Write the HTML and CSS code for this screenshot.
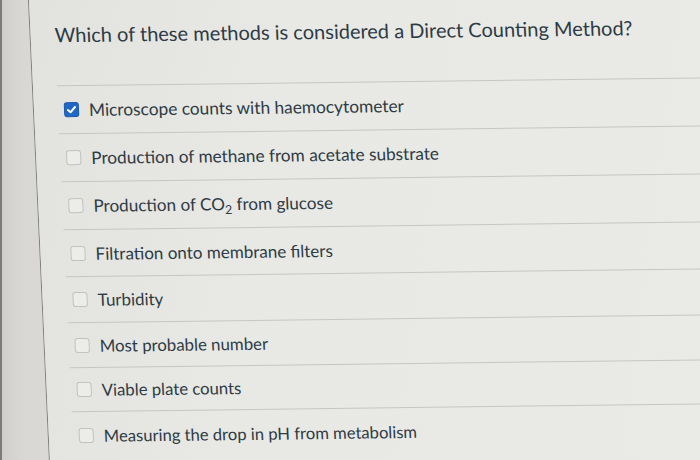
FILE: index.html
```html
<!DOCTYPE html>
<html lang="en">
<head>
<meta charset="utf-8">
<title>Quiz question</title>
<link rel="stylesheet" href="styles.css">
</head>
<body>
<div class="page">
  <div class="bezel"></div>
  <div class="sheet">
    <h1 class="question">Which of these methods is considered a Direct Counting Method?</h1>
    <ul class="answers">
      <li class="opt">
        <span class="box checked"><svg viewBox="0 0 16 16" width="16" height="16"><path d="M3.6 8.4 L6.6 11.3 L12.4 4.8" fill="none" stroke="#fff" stroke-width="2.4" stroke-linecap="round" stroke-linejoin="round"/></svg></span>
        <span class="label">Microscope counts with haemocytometer</span>
      </li>
      <li class="opt"><span class="box"></span><span class="label">Production of methane from acetate substrate</span></li>
      <li class="opt"><span class="box"></span><span class="label">Production of CO<sub>2</sub> from glucose</span></li>
      <li class="opt"><span class="box"></span><span class="label">Filtration onto membrane filters</span></li>
      <li class="opt"><span class="box"></span><span class="label">Turbidity</span></li>
      <li class="opt"><span class="box"></span><span class="label">Most probable number</span></li>
      <li class="opt"><span class="box"></span><span class="label">Viable plate counts</span></li>
      <li class="opt"><span class="box"></span><span class="label">Measuring the drop in pH from metabolism</span></li>
    </ul>
  </div>
</div>
</body>
</html>
```
FILE: styles.css
```css
html, body {
  margin: 0;
  height: 100%;
  overflow: hidden;
}

body {
  background: linear-gradient(to right, #7c7c7a 0, #7c7c7a 2px, #cfceca 2px, #d8d7d3 20px, #dad9d5 60px);
}

.page {
  display: flex;
  width: 790px;
  height: 520px;
  transform-origin: 0 0;
  transform: rotate(-0.7deg) skewX(1.9deg);
  font-family: Lato, "Liberation Sans", sans-serif;
  color: #2d3b45;
}

.bezel {
  flex: none;
  width: 28px;
  border-right: 1px solid #7e7e7c;
}

.sheet {
  flex: 1;
  padding-left: 24px;
  background: linear-gradient(100deg, #e2e2de 0%, #e8e8e4 30%, #eaeae7 100%);
}

.question {
  margin: 0;
  box-sizing: border-box;
  height: 86px;
  padding-top: 21px;
  font-size: 20px;
  line-height: 28px;
  font-weight: 400;
}

.answers {
  list-style: none;
  margin: 0;
  padding: 0;
}

.opt {
  display: flex;
  align-items: center;
  gap: 10px;
  box-sizing: border-box;
  height: 48px;
  padding-left: 6px;
  border-top: 1px solid #c6c6c2;
  font-size: 17.3px;
}

.opt:nth-child(2) { font-size: 17.2px; }
.opt:nth-child(3) { font-size: 17.1px; }
.opt:nth-child(4) { font-size: 17px; height: 47px; }
.opt:nth-child(5) { font-size: 16.9px; height: 46px; }
.opt:nth-child(6) { font-size: 16.8px; height: 45px; }
.opt:nth-child(7) { font-size: 16.7px; height: 44px; }
.opt:nth-child(8) { font-size: 16.6px; }

.box {
  flex: none;
  box-sizing: border-box;
  width: 15px;
  height: 15px;
  border: 1.5px solid #c2c2be;
  border-radius: 3px;
  background: #ecece9;
}

.box.checked {
  border: 1px solid #1b58ad;
  background: #2167c6;
  display: flex;
  align-items: center;
  justify-content: center;
}

.box.checked svg {
  width: 13px;
  height: 13px;
}

.label sub {
  font-size: 0.72em;
  line-height: 0;
  vertical-align: -0.3em;
}
```
